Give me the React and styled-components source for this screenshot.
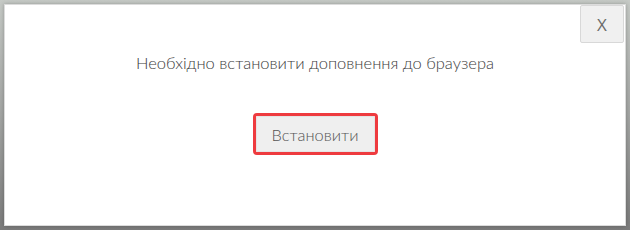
import React from "react";
import styled, { createGlobalStyle } from "styled-components";

const GlobalStyle = createGlobalStyle`
  html, body {
    margin: 0;
    height: 100%;
  }
  body {
    background: linear-gradient(180deg, #c6cac6 0%, #a3a5a3 50%, #7b7b7b 100%);
    font-family: Lato, "Open Sans", sans-serif;
    -webkit-font-smoothing: antialiased;
  }
`;

const Backdrop = styled.div`
  box-sizing: border-box;
  width: 630px;
  height: 230px;
  padding: 4px;
`;

const Dialog = styled.div`
  position: relative;
  box-sizing: border-box;
  height: 222px;
  background: #fff;
  border: 1px solid #dcdcdc;
  box-shadow: 0 0 4px rgba(0, 0, 0, 0.25);
  display: flex;
  flex-direction: column;
  align-items: center;
  padding-top: 45px;
`;

const CloseButton = styled.button`
  position: absolute;
  top: 0;
  right: 1px;
  width: 44px;
  height: 38px;
  background: #f0f0f0;
  border: 1px solid #d8d8d8;
  border-radius: 2px;
  color: #6a6a6a;
  font-family: "Open Sans", sans-serif;
  font-size: 17px;
  padding: 0;
  cursor: pointer;
`;

const Message = styled.p`
  margin: 0;
  font-size: 16.5px;
  font-weight: 300;
  line-height: 26px;
  color: #3c3c3c;
`;

const Highlight = styled.div`
  margin-top: 37px;
  border: 3px solid #ee3b3f;
  border-radius: 4px;
  display: flex;
`;

const InstallButton = styled.button`
  width: 119px;
  height: 36px;
  background: #efefef;
  border: 1px solid #e4e4e4;
  border-radius: 2px;
  color: #555;
  font-family: Lato, "Open Sans", sans-serif;
  font-size: 16.4px;
  font-weight: 300;
  padding: 0;
  cursor: pointer;
`;

export default function App() {
  return (
    <>
      <GlobalStyle />
      <Backdrop>
        <Dialog>
          <CloseButton>X</CloseButton>
          <Message>Необхідно встановити доповнення до браузера</Message>
          <Highlight>
            <InstallButton>Встановити</InstallButton>
          </Highlight>
        </Dialog>
      </Backdrop>
    </>
  );
}
